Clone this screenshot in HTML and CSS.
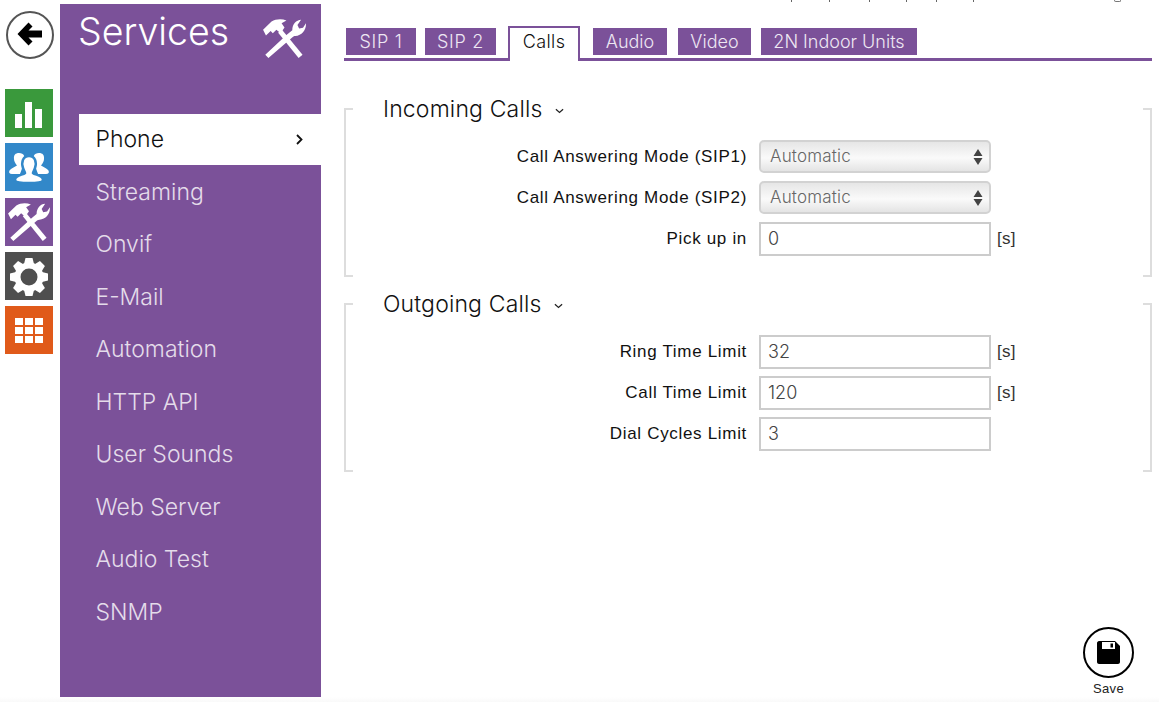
FILE: index.html
```html
<!DOCTYPE html>
<html lang="en">
<head>
<meta charset="utf-8">
<title>Services</title>
<link rel="stylesheet" href="styles.css">
</head>
<body>
<svg class="defs" width="0" height="0" aria-hidden="true">
  <symbol id="tools" viewBox="0 0 44 40">
    <path d="M0 11 8.700 2.500C13 0 19 -.5 24 1.500L19 4.400 22 8.700 18 14.500 13.700 10.900 10 14.500 7.800 12.400 3 17Z"/>
    <path d="M15.500 14 19 10.500 40.500 36.700 36.500 40Z"/>
    <path d="M24 16.500 30 11.600C30 5 34 1 39 .7L35.300 6.200 37 9.800 41 9 44 4.400C44.500 11 40 17 33 17.500 32 17.600 31 18 30.500 18.500L5.500 40 2.300 36.700Z"/>
  </symbol>
</svg>

<nav class="rail">
  <a class="back" href="#">
    <svg viewBox="0 0 30 30" width="30" height="30"><path d="M13.500 3.500 2.500 15 13.500 26.500 17.500 22.500 13.500 18.500H27V11.500H13.500L17.500 7.500Z"/></svg>
  </a>
  <ul class="apps">
    <li class="app green">
      <svg viewBox="0 0 48 48"><rect x="10" y="25" width="7" height="14"/><rect x="20" y="13" width="7" height="26"/><rect x="30" y="20" width="7" height="19"/></svg>
    </li>
    <li class="app blue">
      <svg viewBox="0 0 48 48">
        <path d="M14 10C19 10 21 14 19 20L15 31H7C4.500 31 3.500 29.500 4.500 27.500 6 25 10 24 12 22.500 10 20 9 18 9 16 8.500 12 10.500 10 14 10Z"/>
        <path d="M34 10C29 10 27 14 29 20L33 31H41C43.500 31 44.500 29.500 43.500 27.500 42 25 38 24 36 22.500 38 20 39 18 39 16 39.500 12 37.500 10 34 10Z"/>
        <path class="front" d="M24 13C30 13 32 19 30 25 29 28 28 29 28 30 30 32 38 32 38 37 38 39.500 34 40 24 40 14 40 10 39.500 10 37 10 32 18 32 20 30 20 29 19 28 18 25 16 19 18 13 24 13Z"/>
      </svg>
    </li>
    <li class="app purple">
      <svg class="tools-small" viewBox="0 0 44 40"><use href="#tools"/></svg>
    </li>
    <li class="app grey">
      <svg viewBox="0 0 48 48">
        <circle class="gear-ring" cx="24" cy="25" r="11.500"/>
        <path d="M19 12 20.500 6H27.500L29 12Z"/>
        <path d="M19 12 20.500 6H27.500L29 12Z" transform="rotate(45 24 25)"/>
        <path d="M19 12 20.500 6H27.500L29 12Z" transform="rotate(90 24 25)"/>
        <path d="M19 12 20.500 6H27.500L29 12Z" transform="rotate(135 24 25)"/>
        <path d="M19 12 20.500 6H27.500L29 12Z" transform="rotate(180 24 25)"/>
        <path d="M19 12 20.500 6H27.500L29 12Z" transform="rotate(225 24 25)"/>
        <path d="M19 12 20.500 6H27.500L29 12Z" transform="rotate(270 24 25)"/>
        <path d="M19 12 20.500 6H27.500L29 12Z" transform="rotate(315 24 25)"/>
      </svg>
    </li>
    <li class="app orange">
      <svg viewBox="0 0 48 48">
        <rect x="10" y="12" width="8" height="7"/><rect x="20" y="12" width="8" height="7"/><rect x="30" y="12" width="8" height="7"/>
        <rect x="10" y="21" width="8" height="7"/><rect x="20" y="21" width="8" height="7"/><rect x="30" y="21" width="8" height="7"/>
        <rect x="10" y="30" width="8" height="7"/><rect x="20" y="30" width="8" height="7"/><rect x="30" y="30" width="8" height="7"/>
      </svg>
    </li>
  </ul>
</nav>

<aside class="sidebar">
  <header class="side-head">
    <h1>Services</h1>
    <svg class="tools-big" viewBox="0 0 44 40"><use href="#tools"/></svg>
  </header>
  <ul class="menu">
    <li class="menu-item active">Phone<svg class="caret" viewBox="0 0 7 11" width="7" height="11"><path d="M1 1 5.500 5.500 1 10"/></svg></li>
    <li class="menu-item">Streaming</li>
    <li class="menu-item">Onvif</li>
    <li class="menu-item">E-Mail</li>
    <li class="menu-item">Automation</li>
    <li class="menu-item">HTTP API</li>
    <li class="menu-item">User Sounds</li>
    <li class="menu-item">Web Server</li>
    <li class="menu-item">Audio Test</li>
    <li class="menu-item">SNMP</li>
  </ul>
</aside>

<main class="main">
  <div class="ticks"><i></i><i></i><i></i><i></i><i></i><i></i><b></b></div>
  <div class="tabs">
    <a class="tab tab-sip1" href="#">SIP 1</a>
    <a class="tab tab-sip2" href="#">SIP 2</a>
    <a class="tab current" href="#">Calls</a>
    <a class="tab tab-audio" href="#">Audio</a>
    <a class="tab tab-video" href="#">Video</a>
    <a class="tab tab-units" href="#">2N Indoor Units</a>
  </div>

  <section class="group first">
    <h2>Incoming Calls <svg class="chev" viewBox="0 0 10 6" width="9" height="6"><path d="M1 1 5 4.500 9 1"/></svg></h2>
    <div class="rows">
      <div class="row"><label>Call Answering Mode (SIP1)</label><div class="select">Automatic<svg viewBox="0 0 10 16" width="10" height="16"><path d="M5 0 9.500 7H.5ZM.5 9H9.500L5 16Z"/></svg></div></div>
      <div class="row"><label>Call Answering Mode (SIP2)</label><div class="select">Automatic<svg viewBox="0 0 10 16" width="10" height="16"><path d="M5 0 9.500 7H.5ZM.5 9H9.500L5 16Z"/></svg></div></div>
      <div class="row"><label>Pick up in</label><div class="input">0</div><span class="unit">[s]</span></div>
    </div>
  </section>

  <section class="group">
    <h2>Outgoing Calls <svg class="chev" viewBox="0 0 10 6" width="9" height="6"><path d="M1 1 5 4.500 9 1"/></svg></h2>
    <div class="rows">
      <div class="row"><label>Ring Time Limit</label><div class="input">32</div><span class="unit">[s]</span></div>
      <div class="row"><label>Call Time Limit</label><div class="input">120</div><span class="unit">[s]</span></div>
      <div class="row"><label>Dial Cycles Limit</label><div class="input">3</div></div>
    </div>
  </section>

  <a class="save" href="#">
    <span class="save-ring">
      <svg viewBox="0 0 23 23" width="23" height="23"><path d="M2 0H18L23 5V21C23 22 22 23 21 23H2C1 23 0 22 0 21V2C0 1 1 0 2 0Z"/><path class="floppy-label" d="M5 1H18V8H5ZM13.500 2.500V6.500H16V2.500Z"/></svg>
    </span>
    <span class="save-label">Save</span>
  </a>
</main>
</body>
</html>
```
FILE: styles.css
```css
* { box-sizing: border-box; }
html, body { margin: 0; height: 702px; overflow: hidden; }
body {
  display: flex;
  background: linear-gradient(#fff 697px, #f9f9f9 702px);
  color: #111;
  font-family: "Liberation Sans", Arial, sans-serif;
}
ul { list-style: none; margin: 0; padding: 0; }
a { color: inherit; text-decoration: none; }
.defs { position: absolute; }

.rail { width: 60px; flex: none; padding: 11px 0 0 5px; }
.back {
  display: flex; align-items: center; justify-content: center;
  width: 48px; height: 48px; margin: 0 0 30px 1px;
  border: 2px solid #555; border-radius: 50%; background: #fff;
}
.back svg { margin: -2px 0 0 -1px; }
.apps { display: flex; flex-direction: column; gap: 6.250px; }
.app { width: 48px; height: 48px; }
.app svg { display: block; width: 48px; height: 48px; fill: #fff; }
.app .front { stroke: #3288c9; stroke-width: 2.500; }
.app .gear-ring { fill: none; stroke: #fff; stroke-width: 6; }
.green { background: #3a993c; }
.blue { background: #3288c9; }
.purple { background: #7b5199; display: flex; align-items: center; justify-content: center; }
.app .tools-small { width: 42px; height: 38px; }
.grey { background: #4f4f4f; }
.orange { background: #e05a1a; }

.sidebar {
  width: 261px; height: 693px; margin-top: 4px; flex: none;
  background: #7b5199; color: #fff;
  padding-left: 19px;
}
.side-head { display: flex; justify-content: space-between; height: 110px; padding: 4px 15px 0 0; }
.side-head h1 { margin: 0 0 0 -1px; font: 300 37.500px/47px Inter, "Liberation Sans", sans-serif; }
.tools-big { width: 43px; height: 39px; margin-top: 11px; fill: #fff; }
.menu-item {
  height: 52.500px; padding-left: 16.500px;
  font: 300 23px/51.600px Inter, "Liberation Sans", sans-serif;
  color: #e4dcea;
}
.menu-item.active {
  display: flex; justify-content: space-between; align-items: center;
  height: 51px; margin-bottom: 1.500px; padding-right: 18px;
  background: #fff; color: #111;
}
.caret { fill: none; stroke: #111; stroke-width: 1.800; }

.main { flex: 1; min-width: 0; padding: 0 7px 0 23px; display: flex; flex-direction: column; }
.ticks { display: flex; height: 3px; margin-left: 447px; }
.ticks i { width: 1px; height: 2px; margin-right: 37px; background: #666; }
.ticks i:nth-child(2) { margin-right: 39px; }
.ticks i:nth-child(3) { margin-right: 36px; }
.ticks i:nth-child(4) { margin-right: 29px; }
.ticks i:nth-child(5) { margin-right: 36px; }
.ticks i:nth-child(6) { margin-right: 140px; }
.ticks b { width: 7px; height: 2px; border: 1px solid #777; border-top: 0; border-radius: 0 0 4px 4px; }
.tabs {
  display: flex; align-items: flex-end; gap: 10px;
  height: 58px; padding-left: 2px; border-bottom: 3px solid #7b5199;
}
.tab {
  height: 27px; margin-bottom: 3px; text-align: center;
  background: #7b5199; color: #eee7f3;
  font: 300 18px/27px Inter, "Liberation Sans", sans-serif;
}
.tab-sip1 { width: 70px; margin-right: -1px; letter-spacing: .7px; }
.tab-sip2 { width: 71px; letter-spacing: .7px; }
.tab-audio { width: 74px; margin-right: 1px; }
.tab-video { width: 73px; }
.tab-units { width: 156px; }
.tab.current {
  width: 72px; height: 35px; margin: 0 3px -3px 2px;
  background: #fff; color: #111; line-height: 27px; letter-spacing: .4px;
  border: 2px solid #7b5199; border-bottom: 0;
}
.group { position: relative; height: 169px; margin-top: 26px; padding: 0 0 0 39px; }
.group.first { margin-top: 47px; }
.group::before, .group::after {
  content: ""; position: absolute; top: 0; bottom: 0; width: 7px;
  border: 2px solid #ddd;
}
.group::before { left: 0; border-right: 0; }
.group::after { right: 0; border-left: 0; }
.group h2 {
  margin: -13px 0 0; font: 300 23px/28px Inter, "Liberation Sans", sans-serif;
  letter-spacing: .15px; color: #111;
}
.chev { margin-left: 6px; vertical-align: 3px; fill: none; stroke: #222; stroke-width: 1.400; }
.rows { display: flex; flex-direction: column; gap: 7px; margin: 17px 0 0 -39px; }
.row { display: flex; align-items: center; height: 34px; }
.row label { width: 403px; text-align: right; font-size: 17px; letter-spacing: .68px; color: #111; }
.input, .select {
  width: 232px; height: 34px; margin-left: 12px;
  color: #444; font: 300 18px/30px Inter, "Liberation Sans", sans-serif;
}
.input { border: 2px solid #ccc; padding-left: 7px; background: #fff; }
.select {
  display: flex; align-items: center; justify-content: space-between;
  align-self: flex-start;
  height: 33px; padding: 0 6px 2px 9px; color: #666;
  font-size: 17px; letter-spacing: .2px;
  border: 2px solid #d2d2d2; border-radius: 5px;
  background: linear-gradient(#e6e6e6, #fafafa 55%, #e4e4e4);
}
.select svg { fill: #444; margin-top: 2px; }
.unit { margin-left: 6px; font-size: 17px; letter-spacing: .3px; color: #333; }

.save {
  position: absolute; left: 1083px; top: 627px; width: 51px;
  display: flex; flex-direction: column; align-items: center; gap: 3px;
}
.save-ring {
  display: flex; align-items: center; justify-content: center;
  width: 51px; height: 51px; border: 2px solid #000; border-radius: 50%;
}
.floppy-label { fill: #fff; fill-rule: evenodd; }
.save-label { font-size: 13px; line-height: 16px; color: #222; letter-spacing: .3px; }
```
